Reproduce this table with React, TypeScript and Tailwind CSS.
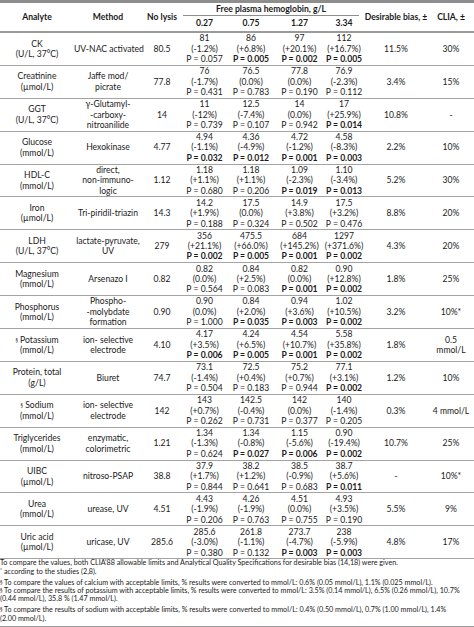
type Cell = { v: string; pct: string; p: string; sig?: boolean };

type Row = {
  name: string;
  unit: string;
  mark?: boolean;
  method: string[];
  base: string;
  vals: Cell[];
  bias: string;
  clia: string[];
};

const c = (v: string, pct: string, p: string, sig = false): Cell => ({ v, pct, p, sig });

const rows: Row[] = [
  {
    name: "CK",
    unit: "(U/L, 37°C)",
    method: ["UV-NAC activated"],
    base: "80.5",
    vals: [
      c("81", "(-1.2%)", "0.057"),
      c("86", "(+6.8%)", "0.005", true),
      c("97", "(+20.1%)", "0.002", true),
      c("112", "(+16.7%)", "0.005", true),
    ],
    bias: "11.5%",
    clia: ["30%"],
  },
  {
    name: "Creatinine",
    unit: "(µmol/L)",
    method: ["Jaffe mod/", "picrate"],
    base: "77.8",
    vals: [
      c("76", "(-1.7%)", "0.431"),
      c("76.5", "(0.0%)", "0.783"),
      c("77.8", "(0.0%)", "0.190"),
      c("76.9", "(-2.3%)", "0.112"),
    ],
    bias: "3.4%",
    clia: ["15%"],
  },
  {
    name: "GGT",
    unit: "(U/L, 37°C)",
    method: ["γ-Glutamyl-", "-carboxy-", "nitroanilide"],
    base: "14",
    vals: [
      c("11", "(-12%)", "0.739"),
      c("12.5", "(-7.4%)", "0.107"),
      c("14", "(0.0%)", "0.942"),
      c("17", "(+25.9%)", "0.014", true),
    ],
    bias: "10.8%",
    clia: ["-"],
  },
  {
    name: "Glucose",
    unit: "(mmol/L)",
    method: ["Hexokinase"],
    base: "4.77",
    vals: [
      c("4.94", "(-1.1%)", "0.032", true),
      c("4.36", "(-4.9%)", "0.012", true),
      c("4.72", "(-1.2%)", "0.001", true),
      c("4.58", "(-8.3%)", "0.003", true),
    ],
    bias: "2.2%",
    clia: ["10%"],
  },
  {
    name: "HDL-C",
    unit: "(mmol/L)",
    method: ["direct,", "non-immuno-", "logic"],
    base: "1.12",
    vals: [
      c("1.18", "(+1.1%)", "0.680"),
      c("1.18", "(+1.1%)", "0.206"),
      c("1.09", "(-2.3%)", "0.019", true),
      c("1.10", "(-3.4%)", "0.013", true),
    ],
    bias: "5.2%",
    clia: ["30%"],
  },
  {
    name: "Iron",
    unit: "(µmol/L)",
    method: ["Tri-piridil-triazin"],
    base: "14.3",
    vals: [
      c("14.2", "(+1.9%)", "0.188"),
      c("17.5", "(0.0%)", "0.324"),
      c("14.9", "(+3.8%)", "0.502"),
      c("17.5", "(+3.2%)", "0.476"),
    ],
    bias: "8.8%",
    clia: ["20%"],
  },
  {
    name: "LDH",
    unit: "(U/L, 37°C)",
    method: ["lactate-pyruvate,", "UV"],
    base: "279",
    vals: [
      c("356", "(+21.1%)", "0.002", true),
      c("475.5", "(+66.0%)", "0.005", true),
      c("684", "(+145.2%)", "0.001", true),
      c("1297", "(+371.6%)", "0.002", true),
    ],
    bias: "4.3%",
    clia: ["20%"],
  },
  {
    name: "Magnesium",
    unit: "(mmol/L)",
    method: ["Arsenazo I"],
    base: "0.82",
    vals: [
      c("0.82", "(0.0%)", "0.564"),
      c("0.84", "(+2.5%)", "0.083"),
      c("0.82", "(0.0%)", "0.001", true),
      c("0.90", "(+12.8%)", "0.002", true),
    ],
    bias: "1.8%",
    clia: ["25%"],
  },
  {
    name: "Phosphorus",
    unit: "(mmol/L)",
    method: ["Phospho-", "-molybdate", "formation"],
    base: "0.90",
    vals: [
      c("0.90", "(0.0%)", "1.000"),
      c("0.84", "(+2.0%)", "0.035", true),
      c("0.94", "(+3.6%)", "0.003", true),
      c("1.02", "(+10.5%)", "0.002", true),
    ],
    bias: "3.2%",
    clia: ["10%*"],
  },
  {
    name: "Potassium",
    unit: "(mmol/L)",
    mark: true,
    method: ["ion- selective", "electrode"],
    base: "4.10",
    vals: [
      c("4.17", "(+3.5%)", "0.006", true),
      c("4.24", "(+6.5%)", "0.005", true),
      c("4.54", "(+10.7%)", "0.001", true),
      c("5.58", "(+35.8%)", "0.002", true),
    ],
    bias: "1.8%",
    clia: ["0.5", "mmol/L"],
  },
  {
    name: "Protein, total",
    unit: "(g/L)",
    method: ["Biuret"],
    base: "74.7",
    vals: [
      c("73.1", "(-1.4%)", "0.504"),
      c("72.5", "(+0.4%)", "0.183"),
      c("75.2", "(+0.7%)", "0.944"),
      c("77.1", "(+3.1%)", "0.002", true),
    ],
    bias: "1.2%",
    clia: ["10%"],
  },
  {
    name: "Sodium",
    unit: "(mmol/L)",
    mark: true,
    method: ["ion- selective", "electrode"],
    base: "142",
    vals: [
      c("143", "(+0.7%)", "0.262"),
      c("142.5", "(-0.4%)", "0.731"),
      c("142", "(0.0%)", "0.377"),
      c("140", "(-1.4%)", "0.205"),
    ],
    bias: "0.3%",
    clia: ["4 mmol/L"],
  },
  {
    name: "Triglycerides",
    unit: "(mmol/L)",
    method: ["enzymatic,", "colorimetric"],
    base: "1.21",
    vals: [
      c("1.34", "(-1.3%)", "0.624"),
      c("1.34", "(-0.8%)", "0.027", true),
      c("1.15", "(-5.6%)", "0.006", true),
      c("0.90", "(-19.4%)", "0.002", true),
    ],
    bias: "10.7%",
    clia: ["25%"],
  },
  {
    name: "UIBC",
    unit: "(µmol/L)",
    method: ["nitroso-PSAP"],
    base: "38.8",
    vals: [
      c("37.9", "(+1.7%)", "0.844"),
      c("38.2", "(+1.2%)", "0.641"),
      c("38.5", "(-0.9%)", "0.683"),
      c("38.7", "(+5.6%)", "0.011", true),
    ],
    bias: "-",
    clia: ["10%*"],
  },
  {
    name: "Urea",
    unit: "(mmol/L)",
    method: ["urease, UV"],
    base: "4.51",
    vals: [
      c("4.43", "(-1.9%)", "0.206"),
      c("4.26", "(-1.9%)", "0.763"),
      c("4.51", "(0.0%)", "0.755"),
      c("4.93", "(+3.5%)", "0.190"),
    ],
    bias: "5.5%",
    clia: ["9%"],
  },
  {
    name: "Uric acid",
    unit: "(µmol/L)",
    method: ["uricase, UV"],
    base: "285.6",
    vals: [
      c("285.6", "(-3.0%)", "0.380"),
      c("261.8", "(-1.1%)", "0.132"),
      c("273.7", "(-4.7%)", "0.003", true),
      c("238", "(-5.9%)", "0.003", true),
    ],
    bias: "4.8%",
    clia: ["17%"],
  },
];

const cols = "grid grid-cols-[74px_68px_40px_45px_48px_49px_40px_64px_46px]";

const Sect = () => <sup className="text-[5px] relative -top-[1px]">§</sup>;

export default function App() {
  return (
    <div
      className="w-[474px] h-[627px] bg-white text-[#1a1a1a] text-[8.6px] leading-[10.4px] overflow-hidden"
      style={{ fontFamily: "Lato, 'Liberation Sans', sans-serif" }}
    >
      <div className="border-t-[3px] border-[#8e8e8e]">
        {/* header */}
        <div className={`${cols} grid-rows-[13px_15px] border-b-2 border-[#9a9a9a] font-bold text-center`}>
          <div className="row-span-2 flex items-center justify-center">Analyte</div>
          <div className="row-span-2 flex items-center justify-center">Method</div>
          <div className="row-span-2 flex items-center justify-center">No lysis</div>
          <div className="col-span-4 flex items-end justify-center">
            <div className="w-full ml-[1px] mr-[5px] border-b border-[#8e8e8e] pb-[1px] whitespace-nowrap">
              Free plasma hemoglobin, g/L
            </div>
          </div>
          <div className="row-span-2 flex items-center justify-center whitespace-nowrap">Desirable bias, ±</div>
          <div className="row-span-2 flex items-center justify-center">CLIA, ±</div>
          <div className="flex items-center justify-center">0.27</div>
          <div className="flex items-center justify-center">0.75</div>
          <div className="flex items-center justify-center">1.27</div>
          <div className="flex items-center justify-center">3.34</div>
        </div>

        {/* body */}
        {rows.map((r) => (
          <div
            key={r.name}
            className={`${cols} h-[32.9px] border-b-[1.5px] border-[#a3a3a3] text-center items-center`}
          >
            <div className="whitespace-nowrap">
              <div>
                {r.mark && (
                  <>
                    <Sect />{" "}
                  </>
                )}
                {r.name}
              </div>
              <div>{r.unit}</div>
            </div>
            <div className="whitespace-nowrap">
              {r.method.map((m) => (
                <div key={m}>{m}</div>
              ))}
            </div>
            <div>{r.base}</div>
            {r.vals.map((v, i) => (
              <div key={i} className="whitespace-nowrap">
                <div>{v.v}</div>
                <div>{v.pct}</div>
                <div className={v.sig ? "font-bold" : ""}>P = {v.p}</div>
              </div>
            ))}
            <div>{r.bias}</div>
            <div>
              {r.clia.map((x) => (
                <div key={x}>{x}</div>
              ))}
            </div>
          </div>
        ))}

        {/* notes */}
        <div className="text-[7.2px] leading-[8.4px] pb-[3px] border-b-2 border-[#9a9a9a] whitespace-nowrap">
          <p>
            To compare the values, both CLIA'88 allowable limits and Analytical Quality Specifications for
            desirable bias (14,18) were given.
          </p>
          <p className="mt-[0.5px]">
            <sup className="text-[5px]">*</sup> according to the studies (2,8).
          </p>
          <p className="mt-[2px]">
            <Sect /> To compare the values of calcium with acceptable limits, % results were converted to mmol/L:
            0.6% (0.05 mmol/L), 1.1% (0.025 mmol/L).
          </p>
          <p>
            <Sect /> To compare the results of potassium with acceptable limits, % results were converted to
            mmol/L: 3.5% (0.14 mmol/L), 6.5% (0.26 mmol/L), 10.7%
            <br />
            (0.44 mmol/L), 35.8 % (1.47 mmol/L).
          </p>
          <p className="mt-[2.5px]">
            <Sect /> To compare the results of sodium with acceptable limits, % results were converted to
            mmol/L: 0.4% (0.50 mmol/L), 0.7% (1.00 mmol/L), 1.4%
            <br />
            (2.00 mmol/L).
          </p>
        </div>
      </div>
    </div>
  );
}
